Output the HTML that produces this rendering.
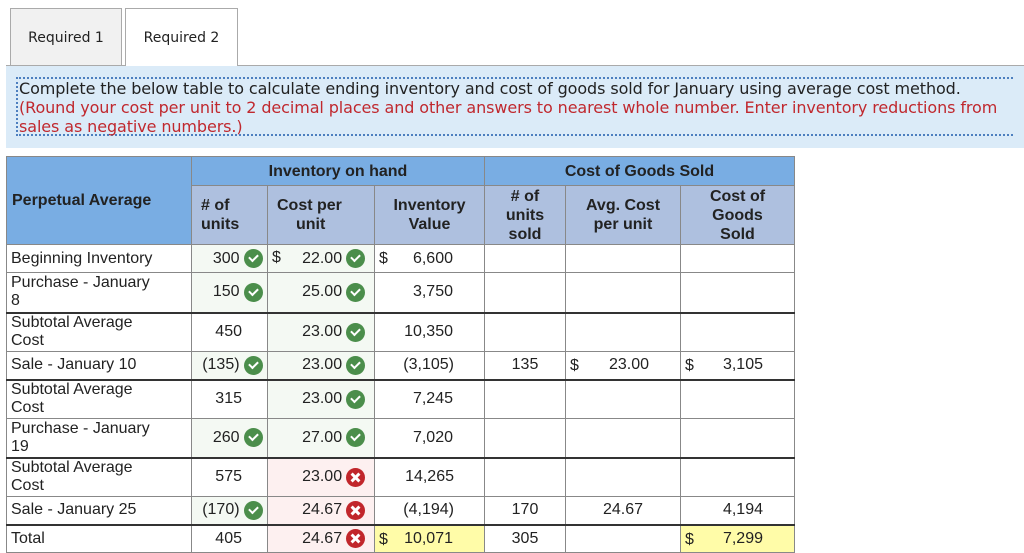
<!DOCTYPE html>
<html><head><meta charset="utf-8"><style>
body{margin:0;width:1024px;height:539px;overflow:hidden;background:#fff;font-family:"Liberation Sans",Arial,sans-serif;position:relative}
.tab{position:absolute;top:8px;height:57px;border:1px solid #aaa;border-bottom:none;font-family:"DejaVu Sans",Verdana,sans-serif;font-size:14px;color:#222;text-align:center;line-height:58px;box-sizing:border-box}
.line{position:absolute;left:6px;right:0;top:65px;height:1px;background:#aaa}
.inst{position:absolute;left:6px;right:0;top:66px;height:82px;background:#dbebf8}
.dot{position:absolute;left:16px;top:77px;width:997px;height:59px;border:2px dotted #4d7fbf;border-right:none;box-sizing:border-box}
.txt{position:absolute;left:19px;top:79px;font-family:"DejaVu Sans",Verdana,sans-serif;font-size:16px;line-height:19px;color:#222;white-space:nowrap;letter-spacing:-0.1px}
.red{color:#c0282e}
table{position:absolute;left:6px;top:156px;border-collapse:collapse;table-layout:fixed;font-size:16px;color:#222;font-family:"Liberation Sans",Arial,sans-serif}
td,th{border:1px solid #888;padding:0;box-sizing:border-box;font-family:"Liberation Sans",Arial,sans-serif}
th{font-weight:bold;font-size:16px;line-height:19px}
.h1{background:#79ade3}
.h2{background:#aec0df}
.c{text-align:center}
.lab{padding-left:4px;line-height:18px;vertical-align:middle}
.g{background:#f4f9f3}
.rd{background:#fdf0f0}
.y{background:#fffca8}
.v{display:flex;justify-content:flex-end;align-items:center;height:100%}
.ic{display:inline-block;width:19px;height:19px;border-radius:50%;margin-left:4px;position:relative;flex:none}
.ok{background:#4b8e4b}
.no{background:#c1262b}
.ok:after{content:"";position:absolute;left:5px;top:5px;width:7px;height:4px;border-left:2.5px solid #fff;border-bottom:2.5px solid #fff;transform:rotate(-45deg)}
.no:before,.no:after{content:"";position:absolute;left:4px;top:8px;width:11px;height:3px;background:#fff;transform:rotate(45deg)}
.no:after{transform:rotate(-45deg)}
.d{position:absolute;left:4px}
td{position:relative}
.dk{border-bottom:2px solid #333}
</style></head><body>
<div class="tab" style="left:10px;width:112px;background:#f1f1f1">Required 1</div>
<div class="tab" style="left:125px;width:113px;background:#fff;height:58px;z-index:2">Required 2</div>
<div class="line"></div>
<div class="inst"></div>
<div class="dot"></div>
<div class="txt">Complete the below table to calculate ending inventory and cost of goods sold for January using average cost method.<br><span class="red">(Round your cost per unit to 2 decimal places and other answers to nearest whole number. Enter inventory reductions from<br>sales as negative numbers.)</span></div>
<table>
<colgroup><col style="width:185px"><col style="width:76px"><col style="width:107px"><col style="width:110px"><col style="width:81px"><col style="width:115px"><col style="width:114px"></colgroup>
<tr style="height:29px"><th class="h1" rowspan="2" style="text-align:left;padding-left:5px">Perpetual Average</th><th class="h1" colspan="3">Inventory on hand</th><th class="h1" colspan="3">Cost of Goods Sold</th></tr>
<tr style="height:59px"><th class="h2" style="text-align:left;padding-left:9px">#&nbsp;of<br>units</th><th class="h2" style="text-align:left;padding-left:9px">Cost per<br><span style="padding-left:19px">unit</span></th><th class="h2">Inventory<br>Value</th><th class="h2">#&nbsp;of<br>units<br>sold</th><th class="h2">Avg. Cost<br>per unit</th><th class="h2">Cost of<br>Goods<br>Sold</th></tr>
<tr style="height:28px"><td class="lab">Beginning Inventory</td><td class="g"><div class="v">300<i class="ic ok"></i>&nbsp;</div></td><td class="g"><span class="d">$</span><div class="v">22.00<i class="ic ok"></i>&nbsp;&nbsp;</div></td><td><span class="d">$</span><div class="v" style="padding-right:31px">6,600</div></td><td></td><td></td><td></td></tr>
<tr style="height:40px"><td class="lab dk">Purchase - January<br>8</td><td class="g dk"><div class="v">150<i class="ic ok"></i>&nbsp;</div></td><td class="g dk"><div class="v">25.00<i class="ic ok"></i>&nbsp;&nbsp;</div></td><td class="dk"><div class="v" style="padding-right:31px">3,750</div></td><td class="dk"></td><td class="dk"></td><td class="dk"></td></tr>
<tr style="height:39px"><td class="lab">Subtotal Average<br>Cost</td><td><div class="v" style="padding-right:25px">450</div></td><td class="g"><div class="v">23.00<i class="ic ok"></i>&nbsp;&nbsp;</div></td><td><div class="v" style="padding-right:31px">10,350</div></td><td></td><td></td><td></td></tr>
<tr style="height:28px"><td class="lab dk">Sale - January 10</td><td class="g dk"><div class="v">(135)<i class="ic ok"></i>&nbsp;</div></td><td class="g dk"><div class="v">23.00<i class="ic ok"></i>&nbsp;&nbsp;</div></td><td class="dk"><div class="v" style="padding-right:30px">(3,105)</div></td><td class="dk c">135</td><td class="dk"><span class="d" style="top:5px">$</span><div class="v" style="padding-right:31px">23.00</div></td><td class="dk"><span class="d" style="top:5px">$</span><div class="v" style="padding-right:31px">3,105</div></td></tr>
<tr style="height:39px"><td class="lab">Subtotal Average<br>Cost</td><td><div class="v" style="padding-right:25px">315</div></td><td class="g"><div class="v">23.00<i class="ic ok"></i>&nbsp;&nbsp;</div></td><td><div class="v" style="padding-right:31px">7,245</div></td><td></td><td></td><td></td></tr>
<tr style="height:39px"><td class="lab dk">Purchase - January<br>19</td><td class="g dk"><div class="v">260<i class="ic ok"></i>&nbsp;</div></td><td class="g dk"><div class="v">27.00<i class="ic ok"></i>&nbsp;&nbsp;</div></td><td class="dk"><div class="v" style="padding-right:31px">7,020</div></td><td class="dk"></td><td class="dk"></td><td class="dk"></td></tr>
<tr style="height:39px"><td class="lab">Subtotal Average<br>Cost</td><td><div class="v" style="padding-right:25px">575</div></td><td class="rd"><div class="v">23.00<i class="ic no"></i>&nbsp;&nbsp;</div></td><td><div class="v" style="padding-right:30px">14,265</div></td><td></td><td></td><td></td></tr>
<tr style="height:28px"><td class="lab dk">Sale - January 25</td><td class="g dk"><div class="v">(170)<i class="ic ok"></i>&nbsp;</div></td><td class="rd dk"><div class="v">24.67<i class="ic no"></i>&nbsp;&nbsp;</div></td><td class="dk"><div class="v" style="padding-right:30px">(4,194)</div></td><td class="dk c">170</td><td class="dk c">24.67</td><td class="dk"><div class="v" style="padding-right:31px">4,194</div></td></tr>
<tr style="height:28px"><td class="lab">Total</td><td><div class="v" style="padding-right:25px">405</div></td><td class="rd"><div class="v">24.67<i class="ic no"></i>&nbsp;&nbsp;</div></td><td class="y"><span class="d" style="top:5px">$</span><div class="v" style="padding-right:31px">10,071</div></td><td class="c">305</td><td></td><td class="y"><span class="d" style="top:5px">$</span><div class="v" style="padding-right:31px">7,299</div></td></tr>
</table>
</body></html>
